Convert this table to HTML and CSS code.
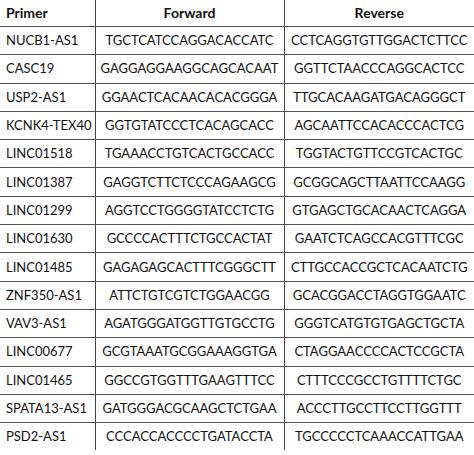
FILE: index.html
```html
<!DOCTYPE html>
<html>
<head>
<meta charset="utf-8">
<link rel="stylesheet" href="styles.css">
</head>
<body>
<table class="primers">
<thead>
<tr><th class="c1">Primer</th><th class="c2">Forward</th><th class="c3">Reverse</th></tr>
</thead>
<tbody>
<tr><td class="c1">NUCB1-AS1</td><td class="c2">TGCTCATCCAGGACACCATC</td><td class="c3">CCTCAGGTGTTGGACTCTTCC</td></tr>
<tr><td class="c1">CASC19</td><td class="c2">GAGGAGGAAGGCAGCACAAT</td><td class="c3">GGTTCTAACCCAGGCACTCC</td></tr>
<tr><td class="c1">USP2-AS1</td><td class="c2">GGAACTCACAACACACGGGA</td><td class="c3">TTGCACAAGATGACAGGGCT</td></tr>
<tr><td class="c1">KCNK4-TEX40</td><td class="c2">GGTGTATCCCTCACAGCACC</td><td class="c3">AGCAATTCCACACCCACTCG</td></tr>
<tr><td class="c1">LINC01518</td><td class="c2">TGAAACCTGTCACTGCCACC</td><td class="c3">TGGTACTGTTCCGTCACTGC</td></tr>
<tr><td class="c1">LINC01387</td><td class="c2">GAGGTCTTCTCCCAGAAGCG</td><td class="c3">GCGGCAGCTTAATTCCAAGG</td></tr>
<tr><td class="c1">LINC01299</td><td class="c2">AGGTCCTGGGGTATCCTCTG</td><td class="c3">GTGAGCTGCACAACTCAGGA</td></tr>
<tr><td class="c1">LINC01630</td><td class="c2">GCCCCACTTTCTGCCACTAT</td><td class="c3">GAATCTCAGCCACGTTTCGC</td></tr>
<tr><td class="c1">LINC01485</td><td class="c2">GAGAGAGCACTTTCGGGCTT</td><td class="c3">CTTGCCACCGCTCACAATCTG</td></tr>
<tr><td class="c1">ZNF350-AS1</td><td class="c2">ATTCTGTCGTCTGGAACGG</td><td class="c3">GCACGGACCTAGGTGGAATC</td></tr>
<tr><td class="c1">VAV3-AS1</td><td class="c2">AGATGGGATGGTTGTGCCTG</td><td class="c3">GGGTCATGTGTGAGCTGCTA</td></tr>
<tr><td class="c1">LINC00677</td><td class="c2">GCGTAAATGCGGAAAGGTGA</td><td class="c3">CTAGGAACCCCACTCCGCTA</td></tr>
<tr><td class="c1">LINC01465</td><td class="c2">GGCCGTGGTTTGAAGTTTCC</td><td class="c3">CTTTCCCGCCTGTTTTCTGC</td></tr>
<tr><td class="c1">SPATA13-AS1</td><td class="c2">GATGGGACGCAAGCTCTGAA</td><td class="c3">ACCCTTGCCTTCCTTGGTTT</td></tr>
<tr><td class="c1">PSD2-AS1</td><td class="c2">CCCACCACCCCTGATACCTA</td><td class="c3">TGCCCCCTCAAACCATTGAA</td></tr>
</tbody>
</table>
</body>
</html>
```
FILE: styles.css
```css
html, body {
  margin: 0;
  padding: 0;
  background: #ffffff;
}
.primers {
  width: 474px;
  border-collapse: collapse;
  table-layout: fixed;
  font-family: "Lato", "Liberation Sans", sans-serif;
  font-size: 13px;
  color: #111;
}
.primers th, .primers td {
  padding: 0;
  height: 27.3px;
  border-top: 1px solid #555;
  border-left: 1px solid #444;
  white-space: nowrap;
  line-height: 1;
}
.primers thead th {
  border-top: none;
  height: 26px;
  font-size: 14px;
  font-weight: 700;
}
.primers .c1 {
  width: 95px;
  border-left: none;
  text-align: left;
  padding-left: 6px;
  box-sizing: border-box;
}
.primers .c2 {
  width: 188px;
  text-align: center;
}
.primers .c3 {
  text-align: center;
}
```
